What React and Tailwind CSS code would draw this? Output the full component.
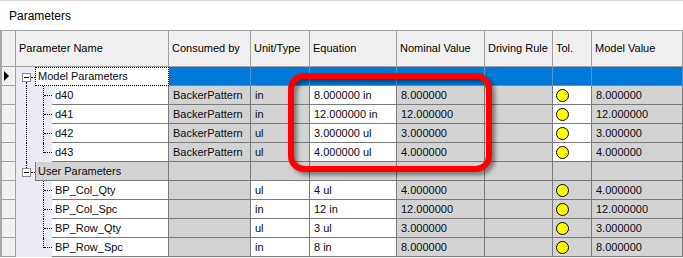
import React from "react";

const W = { rh: 16, name: 153, cons: 82, unit: 59, eq: 87, nom: 88, drv: 68, tol: 39, mv: 91 };

const line = "border-[#7a7a7a]";

function Circle() {
  return <div className="w-[13px] h-[13px] rounded-full bg-[#ffff00] border border-black ml-[3px]" />;
}

function MinusBox() {
  return (
    <div className="absolute left-[6px] top-[6px] w-[9px] h-[9px] border border-[#8a8a8a] bg-white flex items-center justify-center">
      <div className="w-[5px] h-[1px] bg-black" />
    </div>
  );
}

function RowHead({ arrow }) {
  return (
    <div className="w-[16px] shrink-0 h-full bg-[#f0f0f0] border-l-2 border-l-[#a8a8a8] border-r border-b border-[#a0a0a0] flex items-center pl-[2px]">
      {arrow && (
        <div className="w-0 h-0 border-t-[5px] border-b-[5px] border-l-[5px] border-t-transparent border-b-transparent border-l-black" />
      )}
    </div>
  );
}

function Cell({ w, bg, children, className = "" }) {
  return (
    <div
      className={`shrink-0 h-full border-r border-b ${line} flex items-center pl-[4px] whitespace-nowrap ${bg} ${className}`}
      style={{ width: w }}
    >
      {children}
    </div>
  );
}

function GroupRow({ label, model }) {
  return (
    <div className="flex h-[19px]">
      <RowHead arrow={model} />
      <div className="w-[19px] shrink-0 h-full bg-[#ebebf6] relative">
        <MinusBox />
        <div className="absolute left-[15px] top-[10px] w-[4px] border-t border-dotted border-black" />
        {model ? (
          <div className="absolute left-[10px] top-[15px] bottom-0 border-l border-dotted border-black" />
        ) : (
          <div className="absolute left-[10px] top-0 h-[6px] border-l border-dotted border-black" />
        )}
      </div>
      {model ? (
        <div className="w-[134px] shrink-0 h-full bg-white border border-dotted border-black flex items-center pl-[2px] whitespace-nowrap">
          {label}
        </div>
      ) : (
        <div className={`w-[134px] shrink-0 h-full bg-[#d3d3d3] border-r border-b border-l ${line} flex items-center pl-[2px] whitespace-nowrap`}>
          {label}
        </div>
      )}
      {model ? (
        <>
          {[W.cons, W.unit, W.eq, W.nom, W.drv, W.tol, W.mv].map((w, i) => (
            <div key={i} className="shrink-0 h-full bg-[#0078d7] border-r border-b border-[#4f93d6]" style={{ width: w }} />
          ))}
        </>
      ) : (
        <>
          {[W.cons, W.unit, W.eq, W.nom, W.drv, W.tol, W.mv].map((w, i) => (
            <Cell key={i} w={w} bg="bg-[#d3d3d3]" />
          ))}
        </>
      )}
    </div>
  );
}

function ChildRow({ name, cons, unit, eq, nom, mv, last, group, user }) {
  return (
    <div className="flex h-[19px]">
      <RowHead />
      <div className="w-[36px] shrink-0 h-full bg-[#ebebf6] relative">
        {group === "model" && (
          <div className="absolute left-[10px] top-0 bottom-0 border-l border-dotted border-black" />
        )}
        <div
          className={`absolute left-[27px] top-0 border-l border-dotted border-black ${last ? "h-[10px]" : "bottom-0"}`}
        />
        <div className="absolute left-[28px] top-[9px] w-[8px] border-t border-dotted border-black" />
      </div>
      <Cell w={117} bg="bg-white" className="!pl-[3px]">{name}</Cell>
      <Cell w={W.cons} bg="bg-[#d3d3d3]">{cons}</Cell>
      <Cell w={W.unit} bg={user ? "bg-white" : "bg-[#d3d3d3]"}>{unit}</Cell>
      <Cell w={W.eq} bg="bg-white">{eq}</Cell>
      <Cell w={W.nom} bg="bg-[#d3d3d3]">{nom}</Cell>
      <Cell w={W.drv} bg="bg-[#d3d3d3]" />
      <Cell w={W.tol} bg={user ? "bg-[#d3d3d3]" : "bg-white"} className="!pl-0">
        <Circle />
      </Cell>
      <Cell w={W.mv} bg="bg-[#d3d3d3]">{mv}</Cell>
    </div>
  );
}

const headers = [
  ["Parameter Name", W.name],
  ["Consumed by", W.cons],
  ["Unit/Type", W.unit],
  ["Equation", W.eq],
  ["Nominal Value", W.nom],
  ["Driving Rule", W.drv],
  ["Tol.", W.tol],
  ["Model Value", W.mv],
];

export default function App() {
  return (
    <div className="w-[683px] h-[258px] overflow-hidden bg-white relative font-['Liberation_Sans',Arial,sans-serif] text-[11px] text-[#0a0a14]">
      <div className="h-[30px] border-t border-[#d6d6d6] flex items-center pl-[9px] text-[12px] text-black">
        Parameters
      </div>
      <div className="border-t border-[#a0a0a0]">
        <div className="flex h-[36px]">
          <div className="w-[16px] shrink-0 h-full bg-[#f0f0f0] border-l-2 border-l-[#a8a8a8] border-r border-b border-[#a0a0a0]" />
          {headers.map(([t, w]) => (
            <div
              key={t}
              className="shrink-0 h-full bg-[#f0f0f0] border-r border-b border-[#a0a0a0] flex items-center pl-[3px] whitespace-nowrap text-black"
              style={{ width: w }}
            >
              {t}
            </div>
          ))}
        </div>
        <GroupRow label="Model Parameters" model />
        <ChildRow group="model" name="d40" cons="BackerPattern" unit="in" eq="8.000000 in" nom="8.000000" mv="8.000000" />
        <ChildRow group="model" name="d41" cons="BackerPattern" unit="in" eq="12.000000 in" nom="12.000000" mv="12.000000" />
        <ChildRow group="model" name="d42" cons="BackerPattern" unit="ul" eq="3.000000 ul" nom="3.000000" mv="3.000000" />
        <ChildRow group="model" name="d43" cons="BackerPattern" unit="ul" eq="4.000000 ul" nom="4.000000" mv="4.000000" last />
        <GroupRow label="User Parameters" />
        <ChildRow user name="BP_Col_Qty" cons="" unit="ul" eq="4 ul" nom="4.000000" mv="4.000000" />
        <ChildRow user name="BP_Col_Spc" cons="" unit="in" eq="12 in" nom="12.000000" mv="12.000000" />
        <ChildRow user name="BP_Row_Qty" cons="" unit="ul" eq="3 ul" nom="3.000000" mv="3.000000" />
        <ChildRow user name="BP_Row_Spc" cons="" unit="in" eq="8 in" nom="8.000000" mv="8.000000" last />
      </div>
      <div className="absolute left-[288px] top-[73px] w-[204px] h-[99px] border-[6px] border-[#ff0000] rounded-[16px] drop-shadow-[3px_3px_2px_rgba(0,0,0,0.45)]" />
    </div>
  );
}
